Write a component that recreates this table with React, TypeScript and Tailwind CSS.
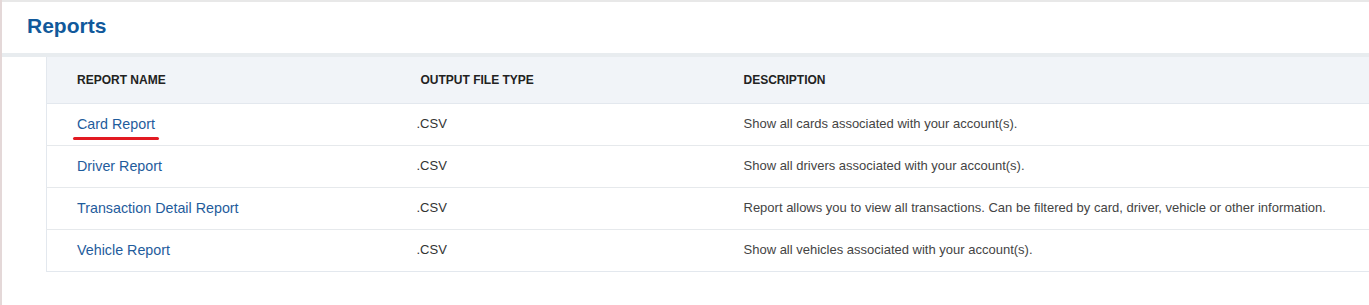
const reports = [
  { name: "Card Report", type: ".CSV", description: "Show all cards associated with your account(s).", marked: true },
  { name: "Driver Report", type: ".CSV", description: "Show all drivers associated with your account(s)." },
  { name: "Transaction Detail Report", type: ".CSV", description: "Report allows you to view all transactions. Can be filtered by card, driver, vehicle or other information." },
  { name: "Vehicle Report", type: ".CSV", description: "Show all vehicles associated with your account(s)." },
];

export default function App() {
  return (
    <div className="h-[305px] w-[1369px] overflow-hidden bg-white font-['Liberation_Sans',Arial,sans-serif] border-l-2 border-[#e4d8d8]">
      {/* Page header */}
      <div className="border-t-2 border-[#e8e8e8] h-[53px] flex items-center pl-[25px] pb-[3px]">
        <h1 className="text-[21px] font-bold text-[#11599b]">Reports</h1>
      </div>
      <div className="h-[4px] bg-[#e8ecef]" />

      {/* Report list */}
      <div className="pl-[44px]">
        <table className="w-[1400px] text-left border-l border-b border-[#e3e8ee] border-collapse">
          <thead className="bg-[#f1f4f8]">
            <tr className="h-[46px] border-b border-[#e3e8ee]">
              <th className="pl-[30px] w-[370px] text-[12px] font-bold text-[#222] uppercase">Report Name</th>
              <th className="pl-[4px] w-[327px] text-[12px] font-bold text-[#222] uppercase">Output File Type</th>
              <th className="text-[12px] font-bold text-[#222] uppercase">Description</th>
            </tr>
          </thead>
          <tbody>
            {reports.map((r) => (
              <tr key={r.name} className="h-[42px] border-b border-[#e6e9ec] last:border-b-0">
                <td className="pl-[30px]">
                  <span className="relative text-[14.3px] text-[#1f5c9c]">
                    {r.name}
                    {r.marked && (
                      <span className="absolute left-[-4px] right-[-4px] top-[21px] h-[3px] rounded-full bg-[#e21a22]" />
                    )}
                  </span>
                </td>
                <td className="text-[13px] text-[#333]">{r.type}</td>
                <td className="text-[13px] text-[#444]">{r.description}</td>
              </tr>
            ))}
          </tbody>
        </table>
      </div>
    </div>
  );
}
